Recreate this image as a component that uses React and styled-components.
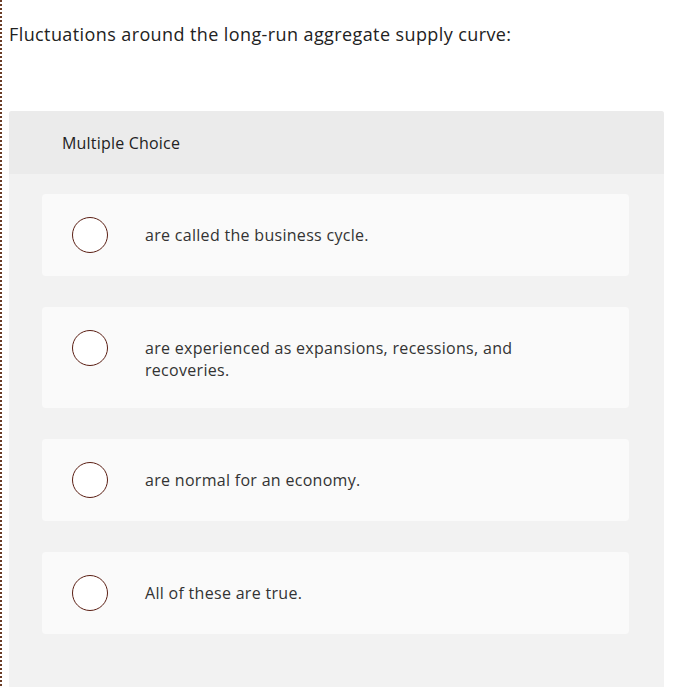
import React from 'react'
import styled, { createGlobalStyle } from 'styled-components'

const GlobalStyle = createGlobalStyle`
  body {
    margin: 0;
    background: #fff;
    font-family: 'Open Sans', 'Liberation Sans', sans-serif;
    color: #333;
  }
`

const options = [
  'are called the business cycle.',
  'are experienced as expansions, recessions, and recoveries.',
  'are normal for an economy.',
  'All of these are true.',
]

const App = () => {
  return (
    <Page>
      <GlobalStyle />
      <Question>Fluctuations around the long-run aggregate supply curve:</Question>
      <Panel>
        <PanelHeader>Multiple Choice</PanelHeader>
        <Choices>
          {options.map((text) => (
            <Choice key={text}>
              <Radio />
              <ChoiceText>{text}</ChoiceText>
            </Choice>
          ))}
        </Choices>
      </Panel>
    </Page>
  )
}

const Page = styled.div`
  min-height: 100vh;
  box-sizing: border-box;
  border-left: 2px dotted #6b3c26;
  padding: 22px 9px 0 7px;
`

const Question = styled.h1`
  margin: 0 0 65px;
  font-size: 18px;
  font-weight: 400;
  line-height: 24px;
  letter-spacing: 0.4px;
  color: #222;
`

const Panel = styled.div`
  background: #f2f2f2;
  border-radius: 3px 3px 0 0;
  padding-bottom: 60px;
`

const PanelHeader = styled.div`
  height: 63px;
  display: flex;
  align-items: center;
  padding-left: 53px;
  background: #ebebeb;
  border-radius: 3px 3px 0 0;
  font-size: 16px;
  letter-spacing: 0.2px;
  color: #222;
`

const Choices = styled.div`
  display: flex;
  flex-direction: column;
  gap: 31px;
  padding: 20px 35px 0 33px;
`

const Choice = styled.div`
  display: flex;
  align-items: flex-start;
  gap: 37px;
  padding: 23px 30px;
  background: #fafafa;
  border-radius: 4px;
`

const Radio = styled.span`
  flex: none;
  width: 34px;
  height: 34px;
  border: 1px solid #5b1f14;
  border-radius: 50%;
  background: #fff;
`

const ChoiceText = styled.div`
  padding: 7px 50px 4px 0;
  font-size: 16px;
  line-height: 22px;
  letter-spacing: 0.3px;
  color: #333;
`

export default App
